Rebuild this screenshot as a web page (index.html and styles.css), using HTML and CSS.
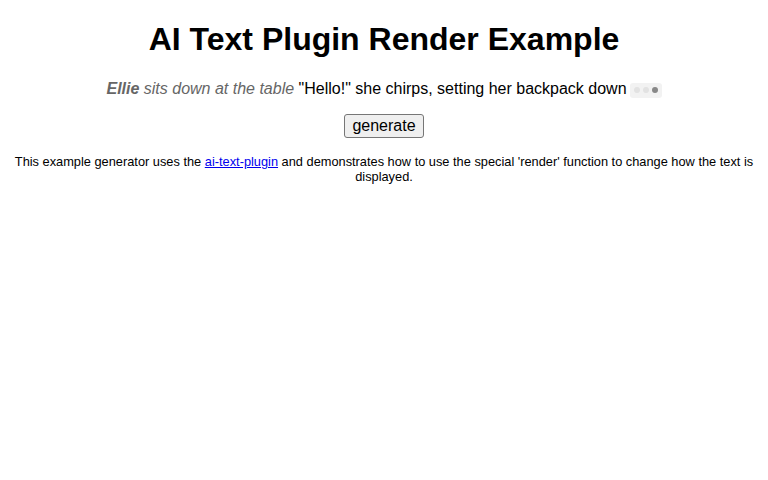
FILE: index.html
```html
<!DOCTYPE html>
<html>
<head>
<meta charset="utf-8">
<link rel="stylesheet" href="styles.css">
</head>
<body>
<main class="page">
  <h1 class="title">AI Text Plugin Render Example</h1>
  <div class="output"><span class="narration"><b>Ellie</b> sits down at the table</span> "Hello!" she chirps, setting her backpack down<span class="loader"><span class="dot d1"></span><span class="dot d2"></span><span class="dot d3"></span></span></div>
  <div class="actions"><button class="gen">generate</button></div>
  <p class="note">This example generator uses the <a href="#">ai-text-plugin</a> and demonstrates how to use the special 'render' function to change how the text is displayed.</p>
</main>
</body>
</html>
```
FILE: styles.css
```css
body {
  margin: 0;
  font-family: "Liberation Sans", Arial, sans-serif;
  color: #000;
  background: #fff;
}
.page {
  padding: 0 8px;
  text-align: center;
}
.title {
  font-size: 32px;
  font-weight: bold;
  margin: 21px 0 0;
  line-height: 37px;
}
.output {
  margin-top: 22px;
  font-size: 16px;
  line-height: 18px;
}
.narration {
  font-style: italic;
  color: #666;
}
.loader {
  display: inline-flex;
  align-items: center;
  gap: 3px;
  margin-left: 3px;
  padding: 0 4px;
  height: 15px;
  vertical-align: 1px;
  background: #f2f2f2;
  border-radius: 3px;
}
.dot {
  width: 6px;
  height: 6px;
  border-radius: 50%;
  background: #e2e2e2;
}
.dot.d3 { background: #888; }
.actions {
  margin-top: 16px;
}
.gen {
  font-family: "Liberation Sans", Arial, sans-serif;
  font-size: 16px;
  line-height: 18px;
  padding: 2px 7px;
  background: #efefef;
  border: 1px solid #767676;
  border-radius: 3px;
  color: #000;
}
.note {
  font-size: 12.8px;
  line-height: 15px;
  margin: 16px 0 0;
}
.note a { color: #00e; }
```
